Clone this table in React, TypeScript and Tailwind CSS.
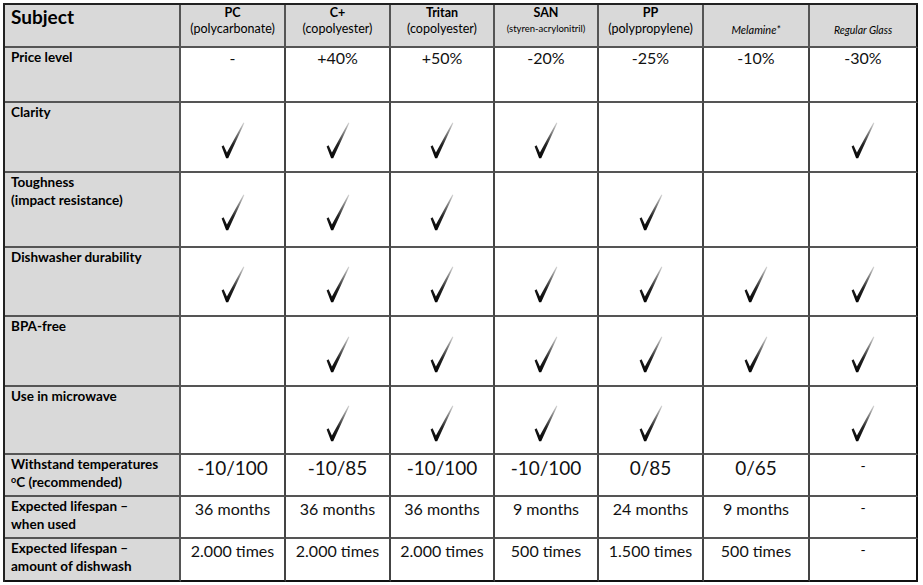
import { Fragment, useId } from 'react'

type Cell = string | boolean | null

const font = { fontFamily: 'Lato, "Open Sans", sans-serif' }

const headers = [
  { name: 'PC', sub: '(polycarbonate)' },
  { name: 'C+', sub: '(copolyester)' },
  { name: 'Tritan', sub: '(copolyester)' },
  { name: 'SAN', sub: '(styren-acrylonitril)', small: true },
  { name: 'PP', sub: '(polypropylene)' },
  { name: '', sub: 'Melamine*', italic: true },
  { name: '', sub: 'Regular Glass', italic: true, tiny: true },
]

const Y = true
const N = null

const rows: { label: string[]; kind: 'price' | 'check' | 'temp' | 'life'; cells: Cell[] }[] = [
  { label: ['Price level'], kind: 'price', cells: ['-', '+40%', '+50%', '-20%', '-25%', '-10%', '-30%'] },
  { label: ['Clarity'], kind: 'check', cells: [Y, Y, Y, Y, N, N, Y] },
  { label: ['Toughness', '(impact resistance)'], kind: 'check', cells: [Y, Y, Y, N, Y, N, N] },
  { label: ['Dishwasher durability'], kind: 'check', cells: [Y, Y, Y, Y, Y, Y, Y] },
  { label: ['BPA-free'], kind: 'check', cells: [N, Y, Y, Y, Y, Y, Y] },
  { label: ['Use in microwave'], kind: 'check', cells: [N, Y, Y, Y, Y, N, Y] },
  { label: ['Withstand temperatures', '°C (recommended)'], kind: 'temp', cells: ['-10/100', '-10/85', '-10/100', '-10/100', '0/85', '0/65', '-'] },
  { label: ['Expected lifespan –', 'when used'], kind: 'life', cells: ['36 months', '36 months', '36 months', '9 months', '24 months', '9 months', '-'] },
  { label: ['Expected lifespan –', 'amount of dishwash'], kind: 'life', cells: ['2.000 times', '2.000 times', '2.000 times', '500 times', '1.500 times', '500 times', '-'] },
]

// hand-drawn looking tick, dark at the base, fading toward the tip
function Check() {
  const id = useId()
  return (
    <svg width="24" height="37" viewBox="0 0 24 37">
      <defs>
        <linearGradient id={id} x1="22" y1="0" x2="6" y2="36" gradientUnits="userSpaceOnUse">
          <stop offset="0" stopColor="#d8d8d8" />
          <stop offset="0.3" stopColor="#808080" />
          <stop offset="0.62" stopColor="#262626" />
          <stop offset="1" stopColor="#050505" />
        </linearGradient>
      </defs>
      <path d="M0.6,24.6 L2.6,23.2 L5.9,30.4 L22.4,0.4 L23.4,1 L7.2,36.3 L5.1,36.3 Z" fill={`url(#${id})`} />
    </svg>
  )
}

function Value({ v, kind, last }: { v: Cell; kind: string; last: boolean }) {
  if (v === true) {
    return (
      <div className="flex h-full items-center justify-center bg-white pt-[6px]">
        <Check />
      </div>
    )
  }
  if (v === null) return <div className="h-full bg-white" />
  if (last && v === '-' && kind !== 'price') {
    return <div className="h-full bg-white pt-[0px] text-center text-[14px] leading-[22px]">-</div>
  }
  const cls =
    kind === 'price'
      ? 'pt-[0px] text-[16px] leading-[20px]'
      : kind === 'temp'
        ? 'pt-[1px] text-[19px] leading-[24px]'
        : 'pt-[2px] text-[16px] leading-[20px]'
  return <div className={`h-full bg-white text-center text-[#111] ${cls}`}>{v}</div>
}

export default function App() {
  return (
    <div className="min-h-[585px] w-[923px] bg-white pl-[3px] pt-[3px]" style={font}>
      <div className="grid w-fit grid-cols-[176px_105px_105px_104px_104px_105px_106px_108px] grid-rows-[43px_55px_70px_75px_69px_70px_68px_42px_42px_43px] border-l-2 border-t-2 border-[#222]">
        <div className="border-b-2 border-r-2 border-[#555] bg-[#d9d9d9] pl-[6px] text-[19px] font-bold leading-[24px] text-black">
          Subject
        </div>
        {headers.map((h, i) => (
          <div
            key={i}
            className={`flex flex-col items-center border-b-2 border-r-2 border-[#555] bg-[#d9d9d9] text-black ${i === 6 ? 'border-r-[#111]' : ''}`}
          >
            <div className="h-[16px] text-[12.5px] font-bold leading-[16px]">{h.name}</div>
            <div
              className={`${h.italic ? 'pt-[1px] italic' : ''} leading-[16px] ${h.small ? 'text-[9.5px]' : h.tiny ? 'text-[10.5px]' : h.italic ? 'text-[11px]' : 'text-[12.5px]'}`}
            >
              {h.sub}
            </div>
          </div>
        ))}
        {rows.map((r, ri) => (
          <Fragment key={ri}>
            <div
              className={`border-b-2 border-r-2 border-[#555] bg-[#d9d9d9] pl-[6px] text-[13.5px] font-bold leading-[18px] text-black ${ri === rows.length - 1 ? 'border-b-[#111]' : ''}`}
            >
              {r.label.map((l, li) =>
                l.startsWith('°') ? (
                  <div key={li}>
                    <sup className="text-[9px]">o</sup>C (recommended)
                  </div>
                ) : (
                  <div key={li}>{l}</div>
                ),
              )}
            </div>
            {r.cells.map((c, ci) => (
              <div
                key={ci}
                className={`border-b-2 border-r-2 ${ci === 6 ? 'border-r-[#111]' : 'border-r-[#444]'} ${ri === rows.length - 1 ? 'border-b-[#111]' : 'border-b-[#555]'}`}
              >
                <Value v={c} kind={r.kind} last={ci === 6} />
              </div>
            ))}
          </Fragment>
        ))}
      </div>
    </div>
  )
}
